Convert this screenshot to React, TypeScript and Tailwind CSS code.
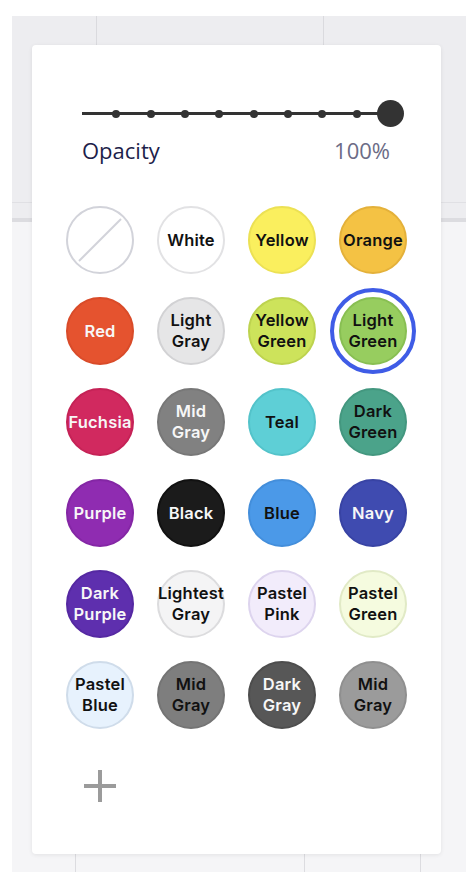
import React from "react";

type Swatch = {
  label: string[];
  bg: string;
  border: string;
  text: string;
  selected?: boolean;
  none?: boolean;
};

const swatches: Swatch[] = [
  { label: [], bg: "bg-white", border: "border-[#d2d3da]", text: "", none: true },
  { label: ["White"], bg: "bg-white", border: "border-[#e2e2e4]", text: "text-[#111]" },
  { label: ["Yellow"], bg: "bg-[#faef5e]", border: "border-[#ece154]", text: "text-[#111]" },
  { label: ["Orange"], bg: "bg-[#f4c244]", border: "border-[#e4b13a]", text: "text-[#111]" },
  { label: ["Red"], bg: "bg-[#e5532f]", border: "border-[#d94b29]", text: "text-[#f7f7f7]" },
  { label: ["Light", "Gray"], bg: "bg-[#e6e6e7]", border: "border-[#d2d2d4]", text: "text-[#111]" },
  { label: ["Yellow", "Green"], bg: "bg-[#cde35b]", border: "border-[#bdd34f]", text: "text-[#111]" },
  { label: ["Light", "Green"], bg: "bg-[#97cd5f]", border: "border-[#88bf52]", text: "text-[#111]", selected: true },
  { label: ["Fuchsia"], bg: "bg-[#d1295f]", border: "border-[#c52256]", text: "text-[#f7f7f7]" },
  { label: ["Mid", "Gray"], bg: "bg-[#818181]", border: "border-[#777]", text: "text-[#f7f7f7]" },
  { label: ["Teal"], bg: "bg-[#5ecfd6]", border: "border-[#53c3ca]", text: "text-[#111]" },
  { label: ["Dark", "Green"], bg: "bg-[#4ba38a]", border: "border-[#43977f]", text: "text-[#111]" },
  { label: ["Purple"], bg: "bg-[#8f2cb1]", border: "border-[#8426a5]", text: "text-[#f7f7f7]" },
  { label: ["Black"], bg: "bg-[#1b1b1b]", border: "border-[#111]", text: "text-[#f7f7f7]" },
  { label: ["Blue"], bg: "bg-[#4b99e8]", border: "border-[#438edb]", text: "text-[#111]" },
  { label: ["Navy"], bg: "bg-[#3f4bb0]", border: "border-[#3843a4]", text: "text-[#f7f7f7]" },
  { label: ["Dark", "Purple"], bg: "bg-[#5e2fae]", border: "border-[#5528a2]", text: "text-[#f7f7f7]" },
  { label: ["Lightest", "Gray"], bg: "bg-[#f4f4f5]", border: "border-[#dcdcde]", text: "text-[#111]" },
  { label: ["Pastel", "Pink"], bg: "bg-[#f2ecfb]", border: "border-[#ddd4ee]", text: "text-[#111]" },
  { label: ["Pastel", "Green"], bg: "bg-[#f5fbdf]", border: "border-[#e1eac6]", text: "text-[#111]" },
  { label: ["Pastel", "Blue"], bg: "bg-[#e7f2fd]", border: "border-[#cfdcea]", text: "text-[#111]" },
  { label: ["Mid", "Gray"], bg: "bg-[#7e7e7e]", border: "border-[#747474]", text: "text-[#111]" },
  { label: ["Dark", "Gray"], bg: "bg-[#575757]", border: "border-[#4d4d4d]", text: "text-[#f7f7f7]" },
  { label: ["Mid", "Gray"], bg: "bg-[#9b9b9b]", border: "border-[#8f8f8f]", text: "text-[#111]" },
];

function Circle({ s }: { s: Swatch }) {
  const inner = (
    <div
      className={`w-[68px] h-[68px] rounded-full border-2 ${s.bg} ${s.border} ${s.text} flex flex-col items-center justify-center text-[16.5px] leading-[21px] font-semibold tracking-[0.2px]`}
      style={{ fontFamily: "Inter, 'Noto Sans', sans-serif" }}
    >
      {s.none ? (
        <svg width="64" height="64" viewBox="0 0 64 64">
          <line x1="11" y1="53" x2="53" y2="11" stroke="#d2d3da" strokeWidth="2" />
        </svg>
      ) : (
        s.label.map((l, i) => <span key={i}>{l}</span>)
      )}
    </div>
  );
  if (s.selected) {
    return (
      <div className="w-[68px] h-[68px] flex items-center justify-center">
        <div className="shrink-0 w-[86px] h-[86px] rounded-full border-[4px] border-[#3f5ce6] bg-white flex items-center justify-center">
          {inner}
        </div>
      </div>
    );
  }
  return inner;
}

export default function App() {
  const ticks = Array.from({ length: 10 });
  return (
    <div className="w-[474px] h-[888px] bg-white pt-4 px-3 relative overflow-hidden">
      {/* backdrop canvas */}
      <div className="w-[454px] h-[856px] flex flex-col bg-[#f5f5f7]">
        <div className="h-[187px] flex bg-[#ededf0] border-b border-[#e0e0e4]">
          <div className="w-[85px] border-r border-[#dadade]" />
          <div className="w-[227px] border-r border-[#dadade]" />
          <div className="flex-1" />
        </div>
        <div className="h-[15px] bg-[#ededf0]" />
        <div className="h-[4px] bg-[#dcdce0]" />
        <div className="flex-1 flex bg-[#f5f5f7]">
          <div className="w-[64px] border-r border-[#dcdce0]" />
          <div className="w-[229px] border-r border-[#dcdce0]" />
          <div className="w-[116px] border-r border-[#dcdce0]" />
          <div className="flex-1" />
        </div>
      </div>

      {/* popover card */}
      <div className="absolute left-[32px] top-[45px] w-[409px] h-[809px] bg-white rounded-[4px] shadow-[0_1px_4px_rgba(0,0,0,0.08)] flex flex-col">
        <div className="pl-[50px] pr-[50px] pt-[67px]">
          <div className="relative h-[3px] bg-[#333333] flex justify-between items-center">
            {ticks.map((_, i) => (
              <div key={i} className="w-0 flex justify-center items-center overflow-visible">
                {i === 0 ? null : i === 9 ? (
                  <div className="shrink-0 w-[27px] h-[27px] rounded-full bg-[#333333]" />
                ) : (
                  <div className="shrink-0 w-[8px] h-[8px] rounded-full bg-[#333333]" />
                )}
              </div>
            ))}
          </div>
          <div
            className="flex justify-between items-center mt-[20px] text-[22px] leading-[30px]"
            style={{ fontFamily: "'Open Sans', 'Noto Sans', sans-serif" }}
          >
            <span className="text-[#1d1e4a]">Opacity</span>
            <span className="text-[#6c6c86] pr-[1px]">100%</span>
          </div>
        </div>

        <div className="pl-[34px] mt-[41px] grid grid-cols-[68px_68px_68px_68px] gap-x-[23px] gap-y-[23px]">
          {swatches.map((s, i) => (
            <Circle key={i} s={s} />
          ))}
        </div>

        <div className="pl-[52px] mt-[41px]">
          <svg width="32" height="32" viewBox="0 0 32 32">
            <rect x="14" y="0" width="4" height="32" fill="#9b9b9b" />
            <rect x="0" y="14" width="32" height="4" fill="#9b9b9b" />
          </svg>
        </div>
      </div>
    </div>
  );
}
